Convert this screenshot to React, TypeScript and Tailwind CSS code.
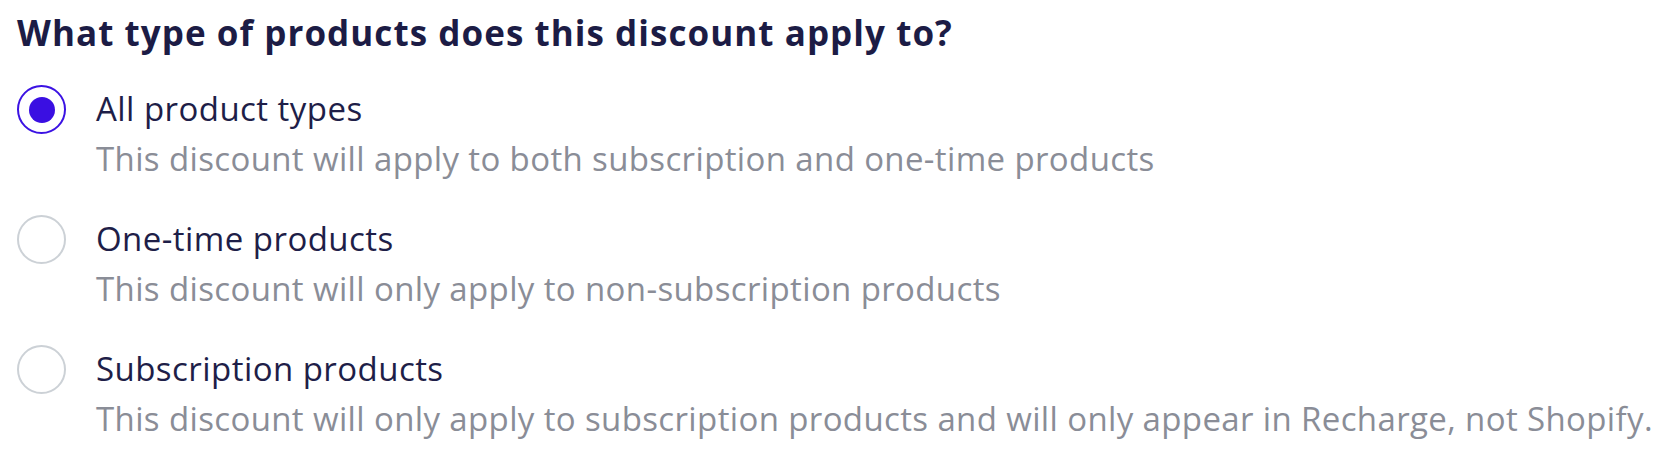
import { useState } from 'react'

const options = [
  {
    id: 'all',
    label: 'All product types',
    description: 'This discount will apply to both subscription and one-time products',
  },
  {
    id: 'onetime',
    label: 'One-time products',
    description: 'This discount will only apply to non-subscription products',
  },
  {
    id: 'subscription',
    label: 'Subscription products',
    description:
      'This discount will only apply to subscription products and will only appear in Recharge, not Shopify.',
  },
]

function Radio({ checked }: { checked: boolean }) {
  return (
    <span
      className={
        checked
          ? 'mt-[2px] flex h-[49px] w-[49px] shrink-0 items-center justify-center rounded-full border-2 border-[#3b12e3] bg-white'
          : 'mt-[2px] flex h-[49px] w-[49px] shrink-0 items-center justify-center rounded-full border-2 border-[#ccd1d6] bg-white'
      }
    >
      {checked && <span className="h-[26px] w-[26px] rounded-full bg-[#3a0fe2]" />}
    </span>
  )
}

function App() {
  const [value, setValue] = useState('all')

  return (
    <div
      className="h-[472px] w-[1672px] overflow-hidden bg-white pl-[17px] pt-[11px]"
      style={{ fontFamily: '"Open Sans", "Noto Sans", sans-serif' }}
    >
      <h2 className="text-[35px] font-bold leading-[44px] tracking-[1.05px] text-[#1c1c45]">
        What type of products does this discount apply to?
      </h2>
      <div className="mt-[28px] flex flex-col gap-[30px]">
        {options.map((o) => (
          <label
            key={o.id}
            className="flex cursor-pointer items-start gap-[30px]"
            onClick={() => setValue(o.id)}
          >
            <Radio checked={value === o.id} />
            <div className="flex flex-col">
              <span className="text-[33px] leading-[51px] tracking-[0.45px] text-[#1e1e48]">
                {o.label}
              </span>
              <span className="text-[33px] leading-[49px] tracking-[0.37px] text-[#8a8d97]">
                {o.description}
              </span>
            </div>
          </label>
        ))}
      </div>
    </div>
  )
}

export default App
